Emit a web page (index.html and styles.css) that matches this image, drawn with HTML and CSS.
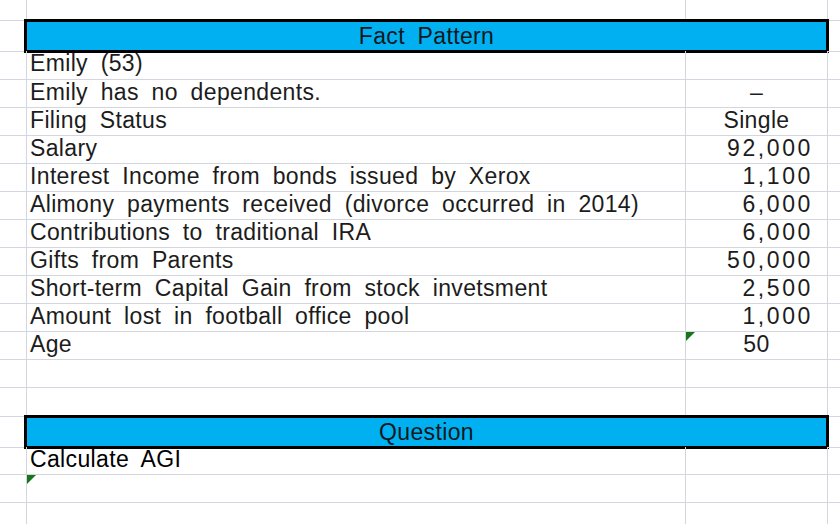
FILE: index.html
```html
<!DOCTYPE html>
<html lang="en">
<head>
<meta charset="utf-8">
<title>Fact Pattern</title>
<link rel="stylesheet" href="styles.css">
</head>
<body>
<div class="sheet">
  <div class="row h21"><div class="c c0"></div><div class="c c1"></div><div class="c c2"></div><div class="c c3"></div></div>
  <div class="row h30"><div class="c c0"></div><div class="band">Fact Pattern</div><div class="c c3"></div></div>
  <div class="row h29"><div class="c c0"></div><div class="c c1">Emily (53)</div><div class="c c2"></div><div class="c c3"></div></div>
  <div class="row h28"><div class="c c0"></div><div class="c c1">Emily has no dependents.</div><div class="c c2 ctr">–</div><div class="c c3"></div></div>
  <div class="row h28"><div class="c c0"></div><div class="c c1">Filing Status</div><div class="c c2 ctr">Single</div><div class="c c3"></div></div>
  <div class="row h28"><div class="c c0"></div><div class="c c1">Salary</div><div class="c c2 num">92,000</div><div class="c c3"></div></div>
  <div class="row h28"><div class="c c0"></div><div class="c c1">Interest Income from bonds issued by Xerox</div><div class="c c2 num">1,100</div><div class="c c3"></div></div>
  <div class="row h28"><div class="c c0"></div><div class="c c1">Alimony payments received (divorce occurred in 2014)</div><div class="c c2 num">6,000</div><div class="c c3"></div></div>
  <div class="row h28"><div class="c c0"></div><div class="c c1">Contributions to traditional IRA</div><div class="c c2 num">6,000</div><div class="c c3"></div></div>
  <div class="row h28"><div class="c c0"></div><div class="c c1">Gifts from Parents</div><div class="c c2 num">50,000</div><div class="c c3"></div></div>
  <div class="row h28"><div class="c c0"></div><div class="c c1">Short-term Capital Gain from stock invetsment</div><div class="c c2 num">2,500</div><div class="c c3"></div></div>
  <div class="row h28"><div class="c c0"></div><div class="c c1">Amount lost in football office pool</div><div class="c c2 num">1,000</div><div class="c c3"></div></div>
  <div class="row h28"><div class="c c0"></div><div class="c c1">Age</div><div class="c c2 ctr flag">50</div><div class="c c3"></div></div>
  <div class="row h28"><div class="c c0"></div><div class="c c1"></div><div class="c c2"></div><div class="c c3"></div></div>
  <div class="row h29"><div class="c c0"></div><div class="c c1"></div><div class="c c2"></div><div class="c c3"></div></div>
  <div class="row h30"><div class="c c0"></div><div class="band">Question</div><div class="c c3"></div></div>
  <div class="row h28"><div class="c c0"></div><div class="c c1 strong">Calculate AGI</div><div class="c c2"></div><div class="c c3"></div></div>
  <div class="row h28"><div class="c c0"></div><div class="c c1 flag"></div><div class="c c2"></div><div class="c c3"></div></div>
  <div class="row h28"><div class="c c0"></div><div class="c c1"></div><div class="c c2"></div><div class="c c3"></div></div>
</div>
</body>
</html>
```

FILE: styles.css
```css
html, body {
  margin: 0;
  padding: 0;
  background: #ffffff;
  overflow: hidden;
}
.sheet {
  width: 840px;
  height: 524px;
  overflow: hidden;
  font-family: "Liberation Sans", Arial, sans-serif;
  font-size: 23px;
  color: #1c1c1c;
  letter-spacing: 0.35px;
  word-spacing: 6px;
}
.row {
  display: grid;
  grid-template-columns: 27px 659px 142px 1fr;
}
.h21 { height: 21px; }
.h28 { height: 28px; }
.h29 { height: 29px; }
.h30 { height: 30px; }
.c {
  box-sizing: border-box;
  border-bottom: 1px solid #d3d6de;
  border-right: 1px solid #d3d6de;
  line-height: 24px;
  white-space: nowrap;
  overflow: hidden;
  position: relative;
}
.c3 { border-right: none; }
.c1 { padding-left: 3px; }
.ctr { text-align: center; }
.num {
  text-align: right;
  padding-right: 14px;
  letter-spacing: 2.6px;
}
.strong { color: #000; }
.band {
  grid-column: 2 / 4;
  margin: -2px -1px -1px -3px;
  box-sizing: border-box;
  border: 3px solid #000;
  background: #00b0f0;
  color: #101820;
  text-align: center;
  line-height: 27px;
  padding-top: 1px;
  white-space: nowrap;
  position: relative;
}
.flag::before {
  content: "";
  position: absolute;
  left: 0;
  top: 0;
  width: 0;
  height: 0;
  border-top: 9px solid #17761a;
  border-right: 9px solid transparent;
}
```
